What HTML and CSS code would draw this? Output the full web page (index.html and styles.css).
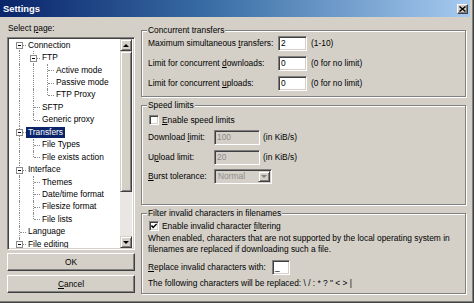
FILE: index.html
```html
<!DOCTYPE html>
<html>
<head>
<meta charset="utf-8">
<title>Settings</title>
<link rel="stylesheet" href="styles.css">
</head>
<body>
<div class="window">
  <div class="titlebar">
    <span class="title">Settings</span>
    <span class="close"><svg width="7" height="6" viewBox="0 0 7 6"><path d="M0.5 0.5 L6.5 5.5 M6.5 0.5 L0.5 5.5" stroke="#000" stroke-width="1.4" fill="none"/></svg></span>
  </div>
  <div class="client">
    <div class="left">
      <div class="sel-label">Select <u>p</u>age:</div>
      <div class="tree">
        <div class="items">
          <div class="row"><span class="g first"><i class="exp"></i></span><span class="lbl">Connection</span></div>
          <div class="row"><span class="g pipe"></span><span class="g tee"><i class="exp"></i></span><span class="lbl">FTP</span></div>
          <div class="row"><span class="g pipe"></span><span class="g pipe"></span><span class="g tee"></span><span class="lbl">Active mode</span></div>
          <div class="row"><span class="g pipe"></span><span class="g pipe"></span><span class="g tee"></span><span class="lbl">Passive mode</span></div>
          <div class="row"><span class="g pipe"></span><span class="g pipe"></span><span class="g elbow"></span><span class="lbl">FTP Proxy</span></div>
          <div class="row"><span class="g pipe"></span><span class="g tee"></span><span class="lbl">SFTP</span></div>
          <div class="row"><span class="g pipe"></span><span class="g elbow"></span><span class="lbl">Generic proxy</span></div>
          <div class="row"><span class="g tee"><i class="exp"></i></span><span class="lbl sel">Transfers</span></div>
          <div class="row"><span class="g pipe"></span><span class="g tee"></span><span class="lbl">File Types</span></div>
          <div class="row"><span class="g pipe"></span><span class="g elbow"></span><span class="lbl">File exists action</span></div>
          <div class="row"><span class="g tee"><i class="exp"></i></span><span class="lbl">Interface</span></div>
          <div class="row"><span class="g pipe"></span><span class="g tee"></span><span class="lbl">Themes</span></div>
          <div class="row"><span class="g pipe"></span><span class="g tee"></span><span class="lbl">Date/time format</span></div>
          <div class="row"><span class="g pipe"></span><span class="g tee"></span><span class="lbl">Filesize format</span></div>
          <div class="row"><span class="g pipe"></span><span class="g elbow"></span><span class="lbl">File lists</span></div>
          <div class="row"><span class="g tee"></span><span class="lbl">Language</span></div>
          <div class="row"><span class="g tee"><i class="exp"></i></span><span class="lbl">File editing</span></div>
        </div>
        <div class="vscroll">
          <div class="sbtn"><span class="arr-up"></span></div>
          <div class="thumb"></div>
          <div class="track"></div>
          <div class="sbtn"><span class="arr-down"></span></div>
        </div>
      </div>
      <div class="btn btn-ok">OK</div>
      <div class="btn btn-cancel"><u>C</u>ancel</div>
    </div>

    <div class="right">
      <div class="group g1">
        <span class="legend">Concurrent transfers</span>
        <div class="rows r1">
          <div class="frow"><span class="flabel w130">Maximum simultaneous <u>t</u>ransfers:</span><span class="edit w29">2</span><span class="note">(1-10)</span></div>
          <div class="frow"><span class="flabel w130">Limit for concurrent <u>d</u>ownloads:</span><span class="edit w29">0</span><span class="note">(0 for no limit)</span></div>
          <div class="frow"><span class="flabel w130">Limit for concurrent <u>u</u>ploads:</span><span class="edit w29">0</span><span class="note">(0 for no limit)</span></div>
        </div>
      </div>

      <div class="group g2">
        <span class="legend">Speed limits</span>
        <div class="crow c2"><span class="check"></span><span class="clabel"><u>E</u>nable speed limits</span></div>
        <div class="rows r2">
          <div class="frow"><span class="flabel w66">Download <u>l</u>imit:</span><span class="edit w46 disabled">100</span><span class="note n3">(in KiB/s)</span></div>
          <div class="frow"><span class="flabel w66">U<u>p</u>load limit:</span><span class="edit w46 disabled">20</span><span class="note n3">(in KiB/s)</span></div>
          <div class="frow"><span class="flabel w66"><u>B</u>urst tolerance:</span><span class="combo"><span class="combo-text">Normal</span><span class="combo-btn"><span class="arr-down dis"></span></span></span></div>
        </div>
      </div>

      <div class="group g3">
        <span class="legend">Filter invalid characters in filenames</span>
        <div class="crow c3"><span class="check checked"><svg width="6" height="6" viewBox="0 0 6 6"><path d="M0.5 2.6 L2.2 4.4 L5.6 0.9" stroke="#000" stroke-width="1.5" fill="none"/></svg></span><span class="clabel">Enable invalid character <u>f</u>iltering</span></div>
        <p class="para">When enabled, characters that are not supported by the local operating system in<br>filenames are replaced if downloading such a file.</p>
        <div class="frow rep"><span class="flabel w124"><u>R</u>eplace invalid characters with:</span><span class="edit w18">_</span></div>
        <div class="follow">The following characters will be replaced: \ / : * ? " &lt; &gt; |</div>
      </div>
    </div>
  </div>
</div>
</body>
</html>
```

FILE: styles.css
```css
* { box-sizing: border-box; }

html, body {
  margin: 0;
  padding: 0;
  background: #d4d0c8;
}

body {
  font-family: "Liberation Sans", Arial, sans-serif;
  font-size: 8.4px;
  line-height: 11px;
  color: #000;
}

u { text-decoration: underline; text-underline-offset: 1px; }

.window {
  width: 474px;
  height: 303px;
  background: #d4d0c8;
  border-right: 1px solid #404040;
  border-bottom: 1px solid #404040;
  box-shadow: inset -1px -1px 0 #808080;
  padding-right: 3px;
  overflow: hidden;
}

/* Title bar */
.titlebar {
  height: 17px;
  display: flex;
  align-items: center;
  justify-content: space-between;
  background: linear-gradient(to right, #0a246a 0%, #3a6ea5 45%, #a6caf0 100%);
  padding: 0 2px 0 3px;
}

.title {
  color: #fff;
  font-weight: bold;
  font-size: 9.4px;
  line-height: 11px;
}

.close {
  width: 11px;
  height: 10px;
  display: flex;
  align-items: center;
  justify-content: center;
  background: #d4d0c8;
  border: 1px solid;
  border-color: #fff #404040 #404040 #fff;
  box-shadow: inset -1px -1px 0 #808080;
}

/* Client area */
.client {
  display: flex;
  gap: 6px;
  padding-left: 7px;
}

.left {
  width: 128px;
  display: flex;
  flex-direction: column;
}

.sel-label {
  margin-top: 5.5px;
  height: 11px;
  padding-left: 1px;
}

.tree {
  margin-top: 3.5px;
  height: 213px;
  display: flex;
  background: #fff;
  border: 1px solid;
  border-color: #808080 #fff #fff #808080;
  box-shadow: inset 1px 1px 0 #404040, inset -1px -1px 0 #d4d0c8;
  padding: 1px 2px 1px 1px;
}

.items {
  flex: 1;
  padding-left: 3px;
  overflow: hidden;
}

.row {
  height: 12.45px;
  display: flex;
  align-items: center;
  white-space: nowrap;
}

.g {
  flex: none;
  width: 14px;
  height: 100%;
  position: relative;
}

.g::before {
  content: "";
  position: absolute;
  left: 7px;
  top: 0;
  bottom: 0;
  border-left: 1px dotted #8a8a8a;
}

.g.first::before { top: 50%; }
.g.elbow::before { bottom: 50%; }

.g.tee::after,
.g.elbow::after,
.g.first::after {
  content: "";
  position: absolute;
  left: 8px;
  right: 0;
  top: 50%;
  border-top: 1px dotted #8a8a8a;
}

.exp {
  position: absolute;
  left: 4px;
  top: 50%;
  margin-top: -3px;
  width: 7px;
  height: 7px;
  border: 1px solid #8a8a8a;
  background: #fff;
  z-index: 1;
}

.exp::after {
  content: "";
  position: absolute;
  left: 1px;
  top: 2px;
  width: 3px;
  height: 1px;
  background: #000;
}

.lbl {
  padding: 0 2px;
  height: 11px;
  line-height: 11px;
}

.lbl.sel {
  background: #0a246a;
  color: #fff;
}

/* Scrollbar */
.vscroll {
  width: 12px;
  display: flex;
  flex-direction: column;
  flex: none;
}

.sbtn {
  height: 12px;
  flex: none;
  display: flex;
  align-items: center;
  justify-content: center;
  background: #d4d0c8;
  border: 1px solid;
  border-color: #d4d0c8 #404040 #404040 #d4d0c8;
  box-shadow: inset 1px 1px 0 #fff, inset -1px -1px 0 #808080;
}

.thumb {
  height: 141px;
  flex: none;
  background: #d4d0c8;
  border: 1px solid;
  border-color: #d4d0c8 #404040 #404040 #d4d0c8;
  box-shadow: inset 1px 1px 0 #fff, inset -1px -1px 0 #808080;
}

.track {
  flex: 1;
  background: #e9e7e3;
}

.arr-up {
  width: 0;
  height: 0;
  border-left: 3px solid transparent;
  border-right: 3px solid transparent;
  border-bottom: 3px solid #000;
}

.arr-down {
  width: 0;
  height: 0;
  border-left: 3px solid transparent;
  border-right: 3px solid transparent;
  border-top: 3px solid #000;
}

.arr-down.dis { border-top-color: #808080; }

/* Buttons */
.btn {
  height: 18px;
  display: flex;
  align-items: center;
  justify-content: center;
  background: #d4d0c8;
  border: 1px solid;
  border-color: #fff #404040 #404040 #fff;
  box-shadow: inset -1px -1px 0 #808080;
}

.btn-ok { margin-top: 3px; }
.btn-cancel { margin-top: 4px; }

/* Right column */
.right {
  width: 325px;
  display: flex;
  flex-direction: column;
}

.group {
  border: 1px solid #808080;
  box-shadow: inset 1px 1px 0 #fff, 1px 1px 0 #fff;
  padding: 0 6px 0 6px;
  display: flex;
  flex-direction: column;
  align-items: flex-start;
}

.g1 { margin-top: 13px; height: 67px; }
.g2 { margin-top: 8px; height: 100px; }
.g3 { margin-top: 8px; height: 81px; }

.legend {
  display: block;
  height: 11px;
  line-height: 11px;
  margin: -6.5px 0 0 -1px;
  padding: 0 1px;
  background: #d4d0c8;
  white-space: nowrap;
}

.rows {
  display: flex;
  flex-direction: column;
}

.r1 { margin-top: 0.5px; gap: 5px; }
.r2 { margin-top: 4px; gap: 4.5px; }

.frow {
  display: flex;
  align-items: center;
  height: 15px;
  white-space: nowrap;
}

.flabel { flex: none; }
.w130 { width: 130px; }
.w66 { width: 66px; }
.w124 { width: 124px; }

.edit {
  flex: none;
  height: 15px;
  line-height: 13px;
  padding: 0 2px;
  background: #fff;
  border: 1px solid;
  border-color: #808080 #fff #fff #808080;
  box-shadow: inset 1px 1px 0 #404040, inset -1px -1px 0 #d4d0c8;
}

.edit.disabled {
  background: #d4d0c8;
  color: #8c8c8c;
}

.w29 { width: 29px; }
.w46 { width: 46px; }
.w18 { width: 18px; }

.note { margin-left: 4px; }
.note.n3 { margin-left: 3px; }

.combo {
  flex: none;
  width: 58px;
  height: 15px;
  display: flex;
  align-items: center;
  justify-content: space-between;
  background: #d4d0c8;
  border: 1px solid;
  border-color: #808080 #fff #fff #808080;
  box-shadow: inset 1px 1px 0 #404040, inset -1px -1px 0 #d4d0c8;
  padding: 1px;
}

.combo-text {
  color: #8c8c8c;
  padding-left: 2px;
  line-height: 11px;
}

.combo-btn {
  width: 12px;
  height: 11px;
  display: flex;
  align-items: center;
  justify-content: center;
  border: 1px solid;
  border-color: #d4d0c8 #404040 #404040 #d4d0c8;
  box-shadow: inset 1px 1px 0 #fff, inset -1px -1px 0 #808080;
}

/* Checkboxes */
.crow {
  display: flex;
  align-items: center;
  height: 12px;
  white-space: nowrap;
}

.c2 { margin-top: 3.5px; }
.c3 { margin-top: 1.5px; }

.check {
  flex: none;
  width: 10px;
  height: 10px;
  margin-left: 1px;
  background: #fff;
  border: 1px solid;
  border-color: #808080 #fff #fff #808080;
  box-shadow: inset 1px 1px 0 #404040, inset -1px -1px 0 #d4d0c8;
  display: flex;
  align-items: center;
  justify-content: center;
}

.check svg { display: block; }

.clabel { margin-left: 3px; }

.para {
  margin: 1px 0 0 0;
  white-space: nowrap;
  line-height: 11px;
}

.rep { margin-top: 5px; }

.follow {
  margin-top: 3px;
  height: 11px;
  white-space: nowrap;
}
```
